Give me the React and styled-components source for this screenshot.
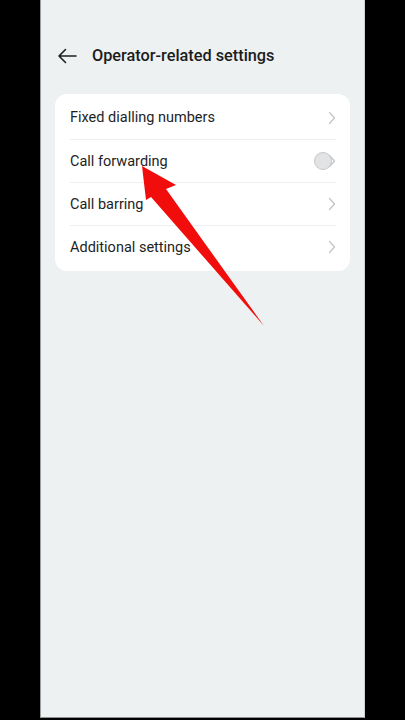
import React from "react";
import styled, { createGlobalStyle } from "styled-components";

const Global = createGlobalStyle`
  html, body { margin: 0; padding: 0; background: #000; }
  body { font-family: Roboto, "Noto Sans", sans-serif; }
`;

const Frame = styled.div`
  position: relative;
  width: 405px;
  height: 720px;
  background: #000;
  display: flex;
  overflow: hidden;
`;

const Screen = styled.div`
  margin-left: 40px;
  width: 325px;
  height: 718px;
  background: #eef1f2;
  border-left: 1px solid #9a9c9d;
  border-bottom: 1px solid #8f9192;
  border-right: 1px solid #cfd2d3;
  display: flex;
  flex-direction: column;
  box-sizing: border-box;
`;

const Header = styled.div`
  display: flex;
  align-items: center;
  gap: 14px;
  padding: 44px 0 0 15px;
  height: 24px;
`;

const BackButton = styled.div`
  width: 22px;
  height: 24px;
  display: flex;
  align-items: center;
  justify-content: center;
`;

const Title = styled.h1`
  margin: 0;
  font-size: 16.3px;
  font-weight: 500;
  color: #1b1c1d;
  line-height: 24px;
`;

const Card = styled.div`
  margin: 26px 14px 0 14px;
  background: #fff;
  border-radius: 12px;
  padding: 2px 0 3px;
`;

const Row = styled.div`
  position: relative;
  height: 43px;
  display: flex;
  align-items: center;
  justify-content: space-between;
  margin: 0 14px 0 15px;
  border-top: ${(p) => (p.first ? "none" : "1px solid #eceeef")};
  box-sizing: border-box;
`;

const Label = styled.span`
  font-size: 14.5px;
  color: #1d1e1f;
  font-weight: 400;
`;

const Chevron = styled.svg`
  width: 8px;
  height: 14px;
`;

const Touch = styled.div`
  position: absolute;
  right: 4px;
  top: 12px;
  width: 18px;
  height: 18px;
  border-radius: 50%;
  background: #e2e3e5;
  border: 1.5px solid #c6c8ca;
  box-sizing: border-box;
`;

const ArrowOverlay = styled.svg`
  position: absolute;
  left: 0;
  top: 0;
  width: 405px;
  height: 720px;
  pointer-events: none;
`;

const items = [
  "Fixed dialling numbers",
  "Call forwarding",
  "Call barring",
  "Additional settings",
];

export default function App() {
  return (
    <>
      <Global />
      <Frame>
        <Screen>
          <Header>
            <BackButton>
              <svg width="20" height="16" viewBox="0 0 20 16">
                <path
                  d="M19 8H2M8.5 1.5L2 8l6.5 6.5"
                  fill="none"
                  stroke="#1e1f20"
                  strokeWidth="1.6"
                  strokeLinecap="round"
                  strokeLinejoin="round"
                />
              </svg>
            </BackButton>
            <Title>Operator-related settings</Title>
          </Header>
          <Card>
            {items.map((t, i) => (
              <Row key={t} first={i === 0}>
                <Label>{t}</Label>
                <Chevron viewBox="0 0 8 14">
                  <path
                    d="M1.5 1.5L6.5 7l-5 5.5"
                    fill="none"
                    stroke="#c2c4c6"
                    strokeWidth="1.3"
                    strokeLinecap="round"
                    strokeLinejoin="round"
                  />
                </Chevron>
                {i === 1 && <Touch />}
              </Row>
            ))}
          </Card>
        </Screen>
        <ArrowOverlay viewBox="0 0 405 720">
          <polygon
            points="142,166 176,185 166,189 264,326 151,197 146,200"
            fill="#f20d0d"
          />
        </ArrowOverlay>
      </Frame>
    </>
  );
}
